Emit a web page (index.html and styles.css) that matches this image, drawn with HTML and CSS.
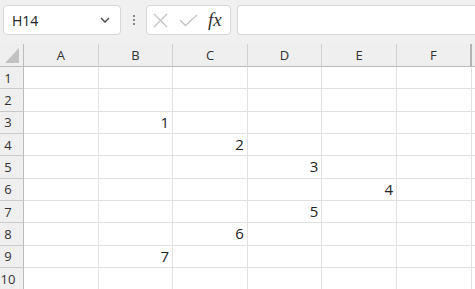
FILE: index.html
```html
<!DOCTYPE html>
<html lang="en">
<head>
  <meta charset="UTF-8">
  <meta name="viewport" content="width=device-width, initial-scale=1.0">
  <title>Sheet</title>
  <link rel="stylesheet" href="styles.css">
</head>
<body>
  <div class="formula-bar">
    <div class="name-box">
      <span>H14</span>
      <svg class="chevron" width="10" height="6" viewBox="0 0 10 6"><path d="M1 1 L5 5 L9 1" fill="none" stroke="#444" stroke-width="1.3"/></svg>
    </div>
    <div class="grip"><i></i><i></i><i></i></div>
    <div class="fx-box">
      <svg width="15" height="15" viewBox="0 0 15 15"><path d="M1 1 L14 14 M14 1 L1 14" stroke="#c4c4c4" stroke-width="1.3" fill="none"/></svg>
      <svg width="19" height="13" viewBox="0 0 19 13"><path d="M1 6 L6.5 11.5 L18 1" stroke="#c4c4c4" stroke-width="1.3" fill="none"/></svg>
      <span class="fx">fx</span>
    </div>
    <div class="formula-input"></div>
  </div>

  <div class="sheet">
    <div class="corner"><span class="tri"></span></div>
    <div class="col-head">A</div>
    <div class="col-head">B</div>
    <div class="col-head">C</div>
    <div class="col-head">D</div>
    <div class="col-head">E</div>
    <div class="col-head">F</div>
    <div class="col-head"></div>

    <div class="row-head">1</div><div class="cell"></div><div class="cell"></div><div class="cell"></div><div class="cell"></div><div class="cell"></div><div class="cell"></div><div class="cell"></div>
    <div class="row-head">2</div><div class="cell"></div><div class="cell"></div><div class="cell"></div><div class="cell"></div><div class="cell"></div><div class="cell"></div><div class="cell"></div>
    <div class="row-head">3</div><div class="cell"></div><div class="cell">1</div><div class="cell"></div><div class="cell"></div><div class="cell"></div><div class="cell"></div><div class="cell"></div>
    <div class="row-head">4</div><div class="cell"></div><div class="cell"></div><div class="cell">2</div><div class="cell"></div><div class="cell"></div><div class="cell"></div><div class="cell"></div>
    <div class="row-head">5</div><div class="cell"></div><div class="cell"></div><div class="cell"></div><div class="cell">3</div><div class="cell"></div><div class="cell"></div><div class="cell"></div>
    <div class="row-head">6</div><div class="cell"></div><div class="cell"></div><div class="cell"></div><div class="cell"></div><div class="cell">4</div><div class="cell"></div><div class="cell"></div>
    <div class="row-head">7</div><div class="cell"></div><div class="cell"></div><div class="cell"></div><div class="cell">5</div><div class="cell"></div><div class="cell"></div><div class="cell"></div>
    <div class="row-head">8</div><div class="cell"></div><div class="cell"></div><div class="cell">6</div><div class="cell"></div><div class="cell"></div><div class="cell"></div><div class="cell"></div>
    <div class="row-head">9</div><div class="cell"></div><div class="cell">7</div><div class="cell"></div><div class="cell"></div><div class="cell"></div><div class="cell"></div><div class="cell"></div>
    <div class="row-head">10</div><div class="cell"></div><div class="cell"></div><div class="cell"></div><div class="cell"></div><div class="cell"></div><div class="cell"></div><div class="cell"></div>
  </div>
</body>
</html>
```

FILE: styles.css
```css
* {
  box-sizing: border-box;
}

body {
  margin: 0;
  width: 475px;
  height: 289px;
  overflow: hidden;
  background: #fff;
  font-family: "Open Sans", "Liberation Sans", sans-serif;
  color: #222;
}

.formula-bar {
  height: 44px;
  background: #f0f0f0;
  display: flex;
  align-items: flex-start;
  padding: 5px 0 0 3px;
}

.name-box,
.fx-box,
.formula-input {
  height: 30px;
  background: #fff;
  border: 1px solid #d6d6d6;
  border-radius: 4px;
  display: flex;
  align-items: center;
}

.name-box {
  width: 118px;
  padding: 0 9px 0 8px;
  justify-content: space-between;
  font-size: 14px;
  color: #222;
}

.chevron {
  margin-right: 1px;
}

.grip {
  width: 25px;
  height: 30px;
  display: flex;
  flex-direction: column;
  align-items: center;
  justify-content: center;
  gap: 2px;
}

.grip i {
  width: 2px;
  height: 2px;
  background: #8a8a8a;
}

.fx-box {
  width: 85px;
  padding: 0 0 0 6px;
  gap: 11px;
}

.fx-box svg:first-child {
  margin-top: 1px;
}

.fx {
  font-family: "Liberation Serif", "DejaVu Serif", serif;
  font-style: italic;
  font-size: 19px;
  color: #333;
  margin-left: -1px;
  letter-spacing: 0;
}

.formula-input {
  flex: 1;
  margin-left: 6px;
  border-right: none;
  border-radius: 4px 0 0 4px;
}

.sheet {
  display: grid;
  grid-template-columns: 24px repeat(6, 74.6px) 1fr;
  grid-template-rows: 23px repeat(10, 22.33px);
}

.corner,
.col-head,
.row-head {
  background: #efefef;
  color: #333;
  font-size: 13px;
}

.corner {
  position: relative;
  border-right: 1px solid #bcbcbc;
  border-bottom: 1px solid #bcbcbc;
}

.tri {
  position: absolute;
  right: 4px;
  bottom: 3px;
  width: 0;
  height: 0;
  border-left: 14px solid transparent;
  border-bottom: 15px solid #c2c2c2;
}

.col-head {
  display: flex;
  align-items: center;
  justify-content: center;
  border-right: 1px solid #d2d2d2;
  border-bottom: 1px solid #bcbcbc;
}

.col-head:nth-child(7) {
  border-right: 2px solid #b4b4b4;
}

.row-head {
  display: flex;
  align-items: center;
  justify-content: center;
  padding-right: 7px;
  border-right: 1px solid #bcbcbc;
  border-bottom: 1px solid #cbcbcb;
}

.cell {
  border-right: 1px solid #e1e1e1;
  border-bottom: 1px solid #e1e1e1;
  font-size: 15px;
  text-align: right;
  padding: 0 3px 0 0;
  line-height: 21px;
}
```
